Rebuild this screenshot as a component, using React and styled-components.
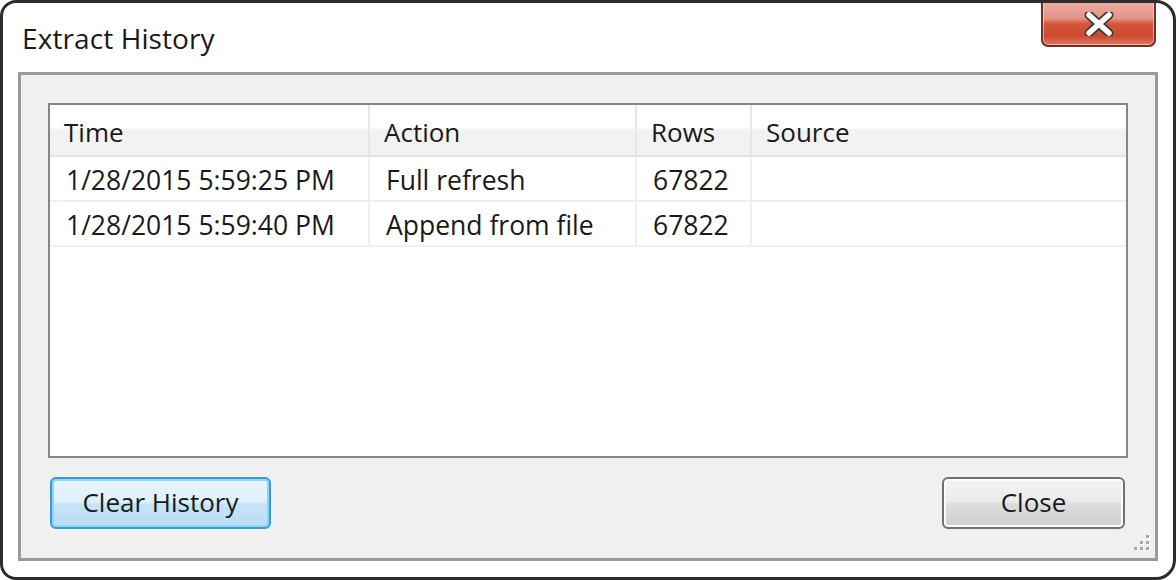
import styled, { createGlobalStyle } from "styled-components"

const Global = createGlobalStyle`
    html, body {
        margin: 0;
        padding: 0;
        background: #ffffff;
    }
    body {
        font-family: "Open Sans", "Noto Sans", sans-serif;
    }
`

const columns = [
    { key: "time", label: "Time", width: 320 },
    { key: "action", label: "Action", width: 267 },
    { key: "rows", label: "Rows", width: 115 },
    { key: "source", label: "Source", width: null },
]

const history = [
    { time: "1/28/2015 5:59:25 PM", action: "Full refresh", rows: "67822", source: "" },
    { time: "1/28/2015 5:59:40 PM", action: "Append from file", rows: "67822", source: "" },
]

export default function App(){
    return(
        <>
            <Global/>
            <Window>
                <TitleBar>
                    <Title>Extract History</Title>
                    <CloseX aria-label="Close">
                        <svg width="30" height="24" viewBox="0 0 30 24">
                            <path d="M5 3 L25 21 M25 3 L5 21" stroke="#3a3a3a" strokeWidth="9" strokeLinecap="round"/>
                            <path d="M5 3 L25 21 M25 3 L5 21" stroke="#ffffff" strokeWidth="5.5" strokeLinecap="round"/>
                        </svg>
                    </CloseX>
                </TitleBar>
                <Panel>
                    <ListBox>
                        <HeaderRow>
                            {columns.map(c => (
                                <HeaderCell key={c.key} $width={c.width}>{c.label}</HeaderCell>
                            ))}
                        </HeaderRow>
                        {history.map((h, i) => (
                            <DataRow key={i}>
                                {columns.map(c => (
                                    <DataCell key={c.key} $width={c.width}>{h[c.key]}</DataCell>
                                ))}
                            </DataRow>
                        ))}
                    </ListBox>
                    <ButtonRow>
                        <Button $focused>Clear History</Button>
                        <Button>Close</Button>
                    </ButtonRow>
                    <Grip>
                        <svg width="22" height="22" viewBox="0 0 22 22">
                            {[[17, 2], [11, 8], [17, 8], [5, 14], [11, 14], [17, 14]].map(([x, y], i) => (
                                <g key={i}>
                                    <rect x={x + 1} y={y + 1} width="3" height="3" fill="#ffffff"/>
                                    <rect x={x} y={y} width="3" height="3" fill="#a8a8a8"/>
                                </g>
                            ))}
                        </svg>
                    </Grip>
                </Panel>
            </Window>
        </>
    )
}


const Window = styled.div`
    width: 1176px;
    height: 580px;
    box-sizing: border-box;
    border: 3px solid #2c2c2c;
    border-radius: 16px 20px 20px 16px;
    background: #ffffff;
    display: flex;
    flex-direction: column;
    overflow: hidden;
`

const TitleBar = styled.div`
    height: 69px;
    display: flex;
    justify-content: space-between;
    align-items: flex-start;
    padding: 0 17px 0 19px;
    flex-shrink: 0;
`

const Title = styled.div`
    margin-top: 16px;
    font-size: 28px;
    color: #1a1a1a;
    letter-spacing: 0.1px;
`

const CloseX = styled.div`
    width: 115px;
    height: 46px;
    margin-top: -2px;
    box-sizing: border-box;
    border: 2px solid #6b3328;
    border-top: none;
    border-radius: 0 0 7px 7px;
    background: linear-gradient(
        to bottom,
        #eab0a4 0%,
        #e39382 40%,
        #d5553b 52%,
        #cc4a30 80%,
        #dc7a62 100%
    );
    box-shadow: inset 0 0 0 1px rgba(255, 220, 210, 0.6);
    display: flex;
    align-items: center;
    justify-content: center;
    padding-top: 2px;
`

const Panel = styled.div`
    position: relative;
    flex: 1;
    margin: 0 15px 16px 15px;
    border: 3px solid #9a9a9a;
    background: #f0f0f0;
    padding: 28px 27px 29px 27px;
    display: flex;
    flex-direction: column;
`

const ListBox = styled.div`
    flex: 1;
    border: 2px solid #838890;
    background: #ffffff;
    display: flex;
    flex-direction: column;
`

const HeaderRow = styled.div`
    display: flex;
    height: 50px;
    border-bottom: 2px solid #e2e3e5;
    background: linear-gradient(to bottom, #ffffff 0%, #ffffff 45%, #f2f2f3 50%, #f2f2f3 100%);
`

const HeaderCell = styled.div`
    ${p => p.$width ? `width: ${p.$width}px;` : "flex: 1;"}
    box-sizing: border-box;
    padding: 4px 0 0 14px;
    display: flex;
    align-items: center;
    font-size: 26px;
    color: #1a1a1a;
    border-right: 2px solid #e6e7e8;

    &:last-child {
        border-right: none;
    }
`

const DataRow = styled.div`
    display: flex;
    height: 43px;
    border-bottom: 2px solid #f0f0f0;
`

const DataCell = styled.div`
    ${p => p.$width ? `width: ${p.$width}px;` : "flex: 1;"}
    box-sizing: border-box;
    padding: 3px 0 0 16px;
    display: flex;
    align-items: center;
    font-size: 26.5px;
    color: #1a1a1a;
    border-right: 2px solid #f0f0f0;
    white-space: nowrap;

    &:last-child {
        border-right: none;
    }
`

const ButtonRow = styled.div`
    display: flex;
    justify-content: space-between;
    padding: 0 3px 0 2px;
    margin-top: 19px;
`

const Button = styled.button`
    width: ${p => p.$focused ? 221 : 183}px;
    height: 52px;
    box-sizing: border-box;
    font-family: "Open Sans", "Noto Sans", sans-serif;
    font-size: 26px;
    color: #1a1a1a;
    border-radius: 6px;
    border: 2px solid ${p => p.$focused ? "#3a9ad8" : "#707070"};
    background: ${p => p.$focused
        ? "linear-gradient(to bottom, #e8f5fd 0%, #def0fb 48%, #c6e4f6 52%, #b9ddf3 100%)"
        : "linear-gradient(to bottom, #f3f3f3 0%, #ebebeb 48%, #dddddd 52%, #cfcfcf 100%)"};
    box-shadow: inset 0 0 0 2px ${p => p.$focused ? "#8fd6f6" : "#fbfbfb"};
    padding: 0;
    padding-bottom: 2px;
`

const Grip = styled.div`
    position: absolute;
    right: 4px;
    bottom: 3px;
    width: 22px;
    height: 22px;
`
